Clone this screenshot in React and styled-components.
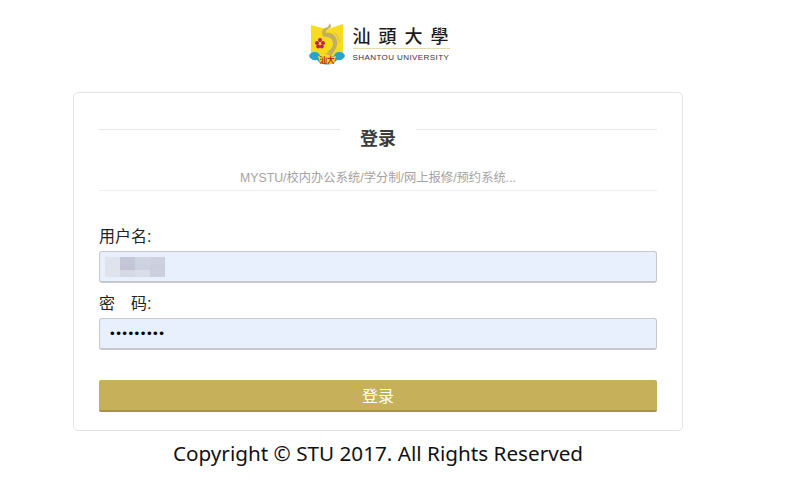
import React from 'react'
import styled, { createGlobalStyle } from 'styled-components'

const GlobalStyle = createGlobalStyle`
  html, body { margin: 0; padding: 0; background: #fff; }
  body { font-family: "Liberation Sans", "Noto Sans CJK SC", sans-serif; color: #333; }
`

const Page = styled.div`
  width: 610px;
  margin-left: 73px;
  padding-top: 23px;
`

const LogoRow = styled.div`
  display: flex;
  justify-content: center;
  gap: 8px;
  height: 43px;
  margin-left: 2px;
  margin-bottom: 26px;
`

const LogoText = styled.div`
  display: flex;
  flex-direction: column;
  width: 97px;
`

const LogoName = styled.div`
  font-family: "Noto Sans CJK TC", serif;
  font-size: 18px;
  font-weight: 500;
  line-height: 25px;
  height: 25px;
  letter-spacing: 8px;
  color: #1c1c1c;
  white-space: nowrap;
`

const LogoRule = styled.div`
  height: 1px;
  background: #e4dcae;
`

const LogoEn = styled.div`
  font-size: 8px;
  line-height: 12px;
  margin-top: 3px;
  letter-spacing: 0.42px;
  color: #333;
  white-space: nowrap;
`

const Card = styled.div`
  box-sizing: border-box;
  height: 339px;
  padding: 25px;
  border: 1px solid #e3e3e3;
  border-radius: 5px;
`

const TitleRow = styled.div`
  display: flex;
  align-items: flex-start;
  height: 25px;
`

const TitleLine = styled.div`
  flex: 1;
  height: 1px;
  margin-top: 11px;
  background: #e7e7e7;
`

const Title = styled.h2`
  width: 76px;
  margin: 0;
  text-align: center;
  font-size: 18px;
  line-height: 21px;
  margin-top: 11px;
  font-weight: 700;
  color: #3c3c3c;
`

const Subtitle = styled.div`
  margin-top: 13px;
  height: 34px;
  border-bottom: 1px solid #eee;
  text-align: center;
  font-size: 12.3px;
  line-height: 45px;
  color: #a3a3a3;
`

const Field = styled.div`
  margin-top: ${props => props.$top}px;
`

const Label = styled.label`
  display: block;
  font-size: 16px;
  line-height: 22px;
  height: ${props => props.$height}px;
  color: #222;
`

const InputWrap = styled.div`
  position: relative;
`

const Input = styled.input`
  box-sizing: border-box;
  display: block;
  width: 100%;
  height: 32px;
  padding: 0 10px;
  border: 1px solid #c8c8cc;
  border-bottom: 2px solid #c6c6cc;
  border-radius: 3px;
  outline: none;
  background: #e8f0fe;
  font-family: "Liberation Sans", sans-serif;
  font-size: 13.3px;
  letter-spacing: 1.5px;
  color: #000;
`

const Mosaic = styled.svg`
  position: absolute;
  left: 6px;
  top: 6px;
`

const SubmitButton = styled.button`
  display: block;
  box-sizing: border-box;
  width: 100%;
  height: 32px;
  margin-top: 30px;
  padding: 0;
  border: 0;
  border-bottom: 2px solid #a8923f;
  border-radius: 2px;
  background: #c6b05a;
  color: #fff;
  font-family: inherit;
  font-size: 16px;
`

const Copyright = styled.div`
  margin-top: 9px;
  text-align: center;
  font-family: "Noto Sans", sans-serif;
  font-size: 20.7px;
  line-height: 27px;
  color: #111;
`

// school crest, a rough redraw of the logo
const Crest = () => (
  <svg width="36" height="43" viewBox="0 0 36 43">
    <path d="M2 2 L17 6 L18 5 L19 6 L34 1 L34 30 Q26 37 18 40 Q10 37 2 30 Z" fill="#f7dc1e" />
    <path d="M21 0 L19 4 Q13 5 13 10 Q13 14 18 14 Q23 14 24 20 Q24 26 18 29 Q22 31 26 27 Q30 21 27 15 Q24 9 17 10 Q16 7 19 6 L22 4 Z" fill="#c2ad62" />
    <path d="M24 8 Q31 13 31 21 L28 14 Z" fill="#d3bf6c" />
    <path d="M15 30 Q21 31 26 27 L22 33 Z" fill="#c2ad62" />
    <g fill="#c4204f">
      <circle cx="11" cy="17" r="2" />
      <circle cx="8" cy="20" r="2" />
      <circle cx="14" cy="20" r="2" />
      <circle cx="9.2" cy="23.5" r="2" />
      <circle cx="12.8" cy="23.5" r="2" />
    </g>
    <path d="M0 33 Q1 29 6 29 Q10 29 11 33 Q18 36 25 33 Q26 29 30 29 Q35 29 36 33 Q34 38 28 37 L25 40 Q18 43 11 40 L8 37 Q2 38 0 33 Z" fill="#2aa3c4" />
    <path d="M9 33 Q18 36 27 33 L25 40 Q18 42 11 40 Z" fill="#f7dc1e" />
    <text x="18" y="39.5" textAnchor="middle" fontSize="7.5" fontWeight="700" fill="#b3242c" fontFamily="Noto Sans CJK SC, sans-serif">汕大</text>
  </svg>
)

// username is pixelated in the screenshot
const cells = [
  [0, 0, 15, 20, '#dfe3ec'],
  [15, 0, 15, 7, '#c5c7d8'], [30, 0, 15, 7, '#cfd4e2'], [45, 0, 15, 7, '#cdd1df'],
  [15, 7, 15, 6, '#c3c5d6'], [30, 7, 15, 6, '#cdd2e0'], [45, 7, 15, 6, '#cbcfdd'],
  [15, 13, 15, 7, '#d6d9e5'], [30, 13, 15, 7, '#dadde8'], [45, 13, 15, 7, '#ccd0de'],
]

const App = () => (
  <>
    <GlobalStyle />
    <Page>
      <LogoRow>
        <Crest />
        <LogoText>
          <LogoName>汕頭大學</LogoName>
          <LogoRule />
          <LogoEn>SHANTOU UNIVERSITY</LogoEn>
        </LogoText>
      </LogoRow>
      <Card>
        <TitleRow>
          <TitleLine />
          <Title>登录</Title>
          <TitleLine />
        </TitleRow>
        <Subtitle>MYSTU/校内办公系统/学分制/网上报修/预约系统...</Subtitle>
        <Field $top={35}>
          <Label $height={25}>用户名:</Label>
          <InputWrap>
            <Input type="text" readOnly />
            <Mosaic width="60" height="20" viewBox="0 0 60 20">
              {cells.map(([x, y, w, h, fill], i) => (
                <rect key={i} x={x} y={y} width={w} height={h} fill={fill} />
              ))}
            </Mosaic>
          </InputWrap>
        </Field>
        <Field $top={10}>
          <Label $height={25}>密&emsp;码:</Label>
          <Input type="password" value="123456789" readOnly />
        </Field>
        <SubmitButton>登录</SubmitButton>
      </Card>
      <Copyright>Copyright © STU 2017. All Rights Reserved</Copyright>
    </Page>
  </>
)

export default App
